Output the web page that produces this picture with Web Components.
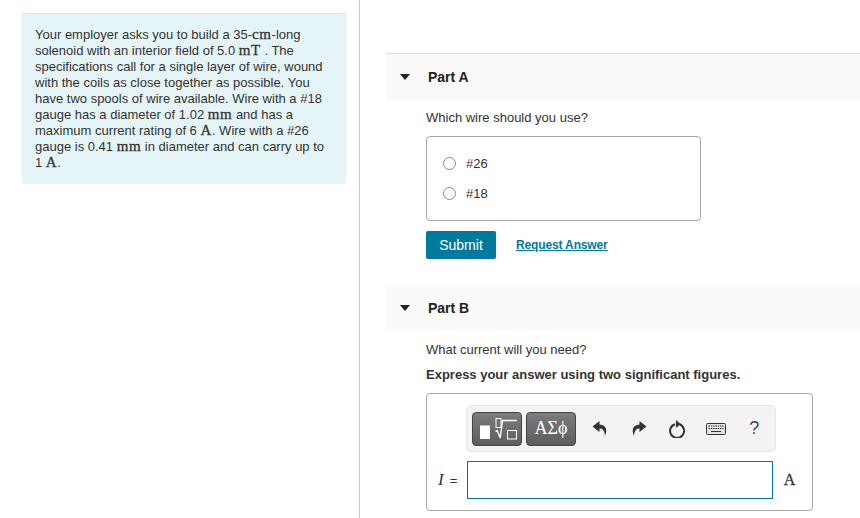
<!DOCTYPE html>
<html>
<head>
<meta charset="utf-8">
<style>
  html, body { margin: 0; padding: 0; background: #fff; }
  body { font-family: "Liberation Sans", Arial, sans-serif; color: #333; overflow: hidden; height: 518px; }
</style>
</head>
<body>
<mp-page>
  <mp-intro>
    Your employer asks you to build a 35-<mp-m>cm</mp-m>-long solenoid with an interior field of 5.0 <mp-m>mT</mp-m> . The specifications call for a single layer of wire, wound with the coils as close together as possible. You have two spools of wire available. Wire with a #18 gauge has a diameter of 1.02 <mp-m>mm</mp-m> and has a maximum current rating of 6 <mp-m>A</mp-m>. Wire with a #26 gauge is 0.41 <mp-m>mm</mp-m> in diameter and can carry up to 1 <mp-m>A</mp-m>.
  </mp-intro>
  <div slot="parts">
    <mp-part label="Part A" first>
      <mp-prompt>Which wire should you use?</mp-prompt>
      <mp-choices></mp-choices>
      <mp-actions></mp-actions>
    </mp-part>
    <mp-part label="Part B">
      <mp-prompt>What current will you need?</mp-prompt>
      <mp-prompt strong>Express your answer using two significant figures.</mp-prompt>
      <mp-answer></mp-answer>
    </mp-part>
  </div>
</mp-page>

<script>
class MpPage extends HTMLElement {
  connectedCallback() {
    this.attachShadow({ mode: "open" });
    this.shadowRoot.innerHTML = `
      <style>
        :host { display:grid; grid-template-columns: 360px 1fr; height:518px; }
        .left { border-right:1px solid #c7cbd0; padding:13px 13px 0 22px; }
        .right { padding:53px 0 0 26px; min-width:0; }
      </style>
      <div class="left"><slot></slot></div>
      <div class="right"><slot name="parts"></slot></div>
    `;
  }
}

class MpIntro extends HTMLElement {
  connectedCallback() {
    this.attachShadow({ mode: "open" });
    this.shadowRoot.innerHTML = `
      <style>
        :host {
          display:block;
          background:#e5f5f7;
          border-top:1px solid #dfe3e6;
          padding:13px 13px 13px;
          font-size:13px;
          line-height:16px;
          color:#333;
        }
      </style>
      <slot></slot>
    `;
  }
}

// inline math, stands in for the MathJax roman
class MpM extends HTMLElement {
  connectedCallback() {
    this.attachShadow({ mode: "open" });
    // no whitespace in this root: the host is inline and it would show as a gap
    this.shadowRoot.innerHTML = `<style>:host { display:inline; font-family:"Liberation Serif", serif; font-size:15px; letter-spacing:.6px; line-height:0; -webkit-text-stroke:.3px currentColor; }</style><slot></slot>`;
  }
}

class MpPart extends HTMLElement {
  connectedCallback() {
    this.attachShadow({ mode: "open" });
    const first = this.hasAttribute("first");
    this.shadowRoot.innerHTML = `
      <style>
        :host { display:block; }
        .head {
          display:flex;
          align-items:center;
          height:46px;
          background:#f9f9f9;
          ${first ? "border-top:1px solid #e0e0e0;" : ""}
          font-size:14px;
          font-weight:700;
          color:#222;
        }
        .arrow {
          width:0; height:0;
          margin:0 18px 0 14px;
          border-left:5px solid transparent;
          border-right:5px solid transparent;
          border-top:6px solid #222;
        }
        .body { padding:${first ? 9 : 10}px 0 0 40px; display:flex; flex-direction:column; }
      </style>
      <div class="head"><span class="arrow"></span>${this.getAttribute("label")}</div>
      <div class="body"><slot></slot></div>
    `;
  }
}

class MpPrompt extends HTMLElement {
  connectedCallback() {
    this.attachShadow({ mode: "open" });
    const strong = this.hasAttribute("strong");
    this.shadowRoot.innerHTML = `
      <style>
        :host { display:block; font-size:13px; line-height:17px; color:#333; font-weight:${strong ? 700 : 400}; margin-bottom:8px; }
      </style>
      <slot></slot>
    `;
  }
}

class MpChoices extends HTMLElement {
  connectedCallback() {
    this.attachShadow({ mode: "open" });
    const rows = ["#26", "#18"].map((t) => `<div class="row"><span class="dot"></span>${t}</div>`).join("");
    this.shadowRoot.innerHTML = `
      <style>
        :host {
          display:flex;
          flex-direction:column;
          gap:10px;
          width:273px;
          height:67px;
          margin-top:2px;
          border:1px solid #a8a8a8;
          border-radius:4px;
          padding-top:16px;
          font-size:13px;
          color:#333;
        }
        .row { display:flex; align-items:center; height:20px; padding-left:16px; }
        .dot {
          width:11px; height:11px;
          border:1px solid #8a8a8a;
          border-radius:50%;
          background:#fff;
          margin-right:10px;
        }
      </style>
      ${rows}
    `;
  }
}

class MpActions extends HTMLElement {
  connectedCallback() {
    this.attachShadow({ mode: "open" });
    this.shadowRoot.innerHTML = `
      <style>
        :host { display:flex; align-items:center; gap:20px; margin-top:10px; height:28px; margin-bottom:26px; font-size:14px; }
        .btn {
          display:flex; align-items:center; justify-content:center;
          width:70px; height:28px;
          background:#007a9c;
          color:#fff;
          border-radius:2px;
        }
        a { color:#007a9c; font-size:12px; font-weight:700; text-decoration:underline; letter-spacing:-.14px; }
      </style>
      <span class="btn">Submit</span>
      <a href="#">Request Answer</a>
    `;
  }
}

class MpAnswer extends HTMLElement {
  connectedCallback() {
    this.attachShadow({ mode: "open" });
    this.shadowRoot.innerHTML = `
      <style>
        :host {
          display:block;
          width:385px;
          height:116px;
          margin-top:2px;
          border:1px solid #a8a8a8;
          border-radius:4px;
          font-family:"Liberation Serif", serif;
        }
        .bar {
          display:flex;
          align-items:center;
          box-sizing:border-box;
          width:310px;
          height:47px;
          margin:11px 0 0 39px;
          padding:0 0 0 5px;
          gap:4px;
          background:#f3f3f3;
          border:1px solid #e6e6e6;
          border-radius:5px;
        }
        .tpl {
          box-sizing:border-box;
          display:flex; align-items:center; justify-content:center;
          width:50px; height:34px;
          background:linear-gradient(#7c7c7c, #5d5d5d);
          border:1px solid #444;
          border-radius:4px;
          color:#fff;
          font-size:18px;
        }
        .tpl svg { display:block; flex:none; margin:-1px; }
        .tools { display:flex; align-items:center; margin-left:1px; }
        .tool { display:flex; align-items:center; justify-content:center; width:38.5px; height:24px; }
        .q { font-family:"Liberation Sans", sans-serif; font-size:18px; color:#444; }
        .line { display:flex; align-items:center; margin-top:9px; padding-left:11px; height:38px; }
        .var { font-style:italic; font-size:17px; color:#333; }
        .eq { font-family:"Liberation Sans", sans-serif; font-size:13px; margin-left:6px; width:17px; }
        .input { box-sizing:border-box; width:306px; height:38px; border:1px solid #007a9c; background:#fff; }
        .unit { margin-left:11px; font-size:16px; color:#333; -webkit-text-stroke:.3px currentColor; }
      </style>
      <div class="bar">
        <span class="tpl">
          <svg width="50" height="34" viewBox="0 0 50 34" fill="none" stroke="#fff" stroke-width="1">
            <rect x="8" y="13.500" width="10" height="13.500" fill="#fff" stroke="none"/>
            <rect x="24" y="6.500" width="5" height="9"/>
            <path d="M23.500 19.500l1.800-.9 2.900 7.400 2.300-17.500h14.200" stroke-width="1.400"/>
            <rect x="35.500" y="18.500" width="9" height="8.500"/>
          </svg>
        </span>
        <span class="tpl">ΑΣϕ</span>
        <span class="tools">
          <span class="tool"><svg width="16" height="17" viewBox="0 0 16 17" fill="#333"><path d="M7.500 1 .5 6.500l7 5.500V8.500c3 0 5 1.500 5.500 7.500 2.500-6 1.500-11-5.500-11.500z"/></svg></span>
          <span class="tool"><svg width="16" height="17" viewBox="0 0 16 17" fill="#333"><path d="M8.500 1l7 5.500-7 5.500V8.500c-3 0-5 1.500-5.500 7.500-2.500-6-1.500-11 5.500-11.500z"/></svg></span>
          <span class="tool"><svg width="18" height="18" viewBox="0 0 18 18" fill="none" stroke="#333" stroke-width="2"><path d="M11.500 4.300a7 7 0 1 1-4.500-.1"/><path d="M8 0l4.500 4L8 8z" fill="#333" stroke="none"/></svg></span>
          <span class="tool"><svg width="20" height="12" viewBox="0 0 20 12" fill="#e4e4e4" stroke="#333"><rect x=".5" y=".5" width="19" height="11" rx="1"/><path d="M2.500 3h15M2.500 5.500h15" stroke-dasharray="1.500 .8"/><path d="M5 8.500h10"/></svg></span>
          <span class="tool q">?</span>
        </span>
      </div>
      <div class="line">
        <span class="var">I</span><span class="eq">=</span>
        <span class="input"></span>
        <span class="unit">A</span>
      </div>
    `;
  }
}

customElements.define("mp-page", MpPage);
customElements.define("mp-intro", MpIntro);
customElements.define("mp-m", MpM);
customElements.define("mp-part", MpPart);
customElements.define("mp-prompt", MpPrompt);
customElements.define("mp-choices", MpChoices);
customElements.define("mp-actions", MpActions);
customElements.define("mp-answer", MpAnswer);
</script>
</body>
</html>
